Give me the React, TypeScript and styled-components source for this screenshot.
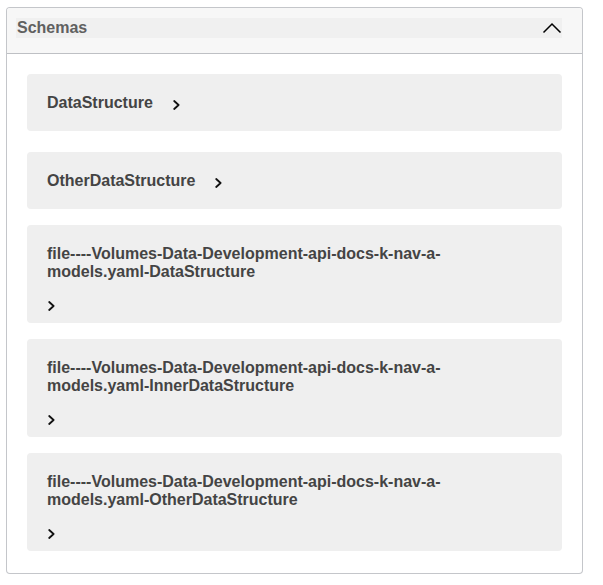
import { createGlobalStyle } from 'styled-components';
import styled from 'styled-components';

const GlobalStyle = createGlobalStyle`
    html, body {
        margin: 0;
        padding: 0;
        background: #ffffff;
        font-family: "Liberation Sans", Arial, Helvetica, sans-serif;
    }
`;

const Page = styled.div`
    padding: 7px 20px 12px 6px;
    width: 577px;
`;

const Section = styled.section`
    border: 1px solid rgba(59, 65, 81, 0.3);
    border-radius: 4px;
    background: #ffffff;
    overflow: hidden;
`;

const Header = styled.h4`
    margin: 0;
    padding: 10px 20px 15px 9px;
    background: #f7f7f7;
    border-bottom: 1px solid rgba(59, 65, 81, 0.3);
`;

const HeaderButton = styled.button`
    display: flex;
    align-items: center;
    justify-content: space-between;
    width: 100%;
    height: 20px;
    padding: 0;
    border: none;
    background: #f0f0f0;
    font-family: inherit;
    font-size: 16px;
    font-weight: 700;
    color: #606060;
    cursor: pointer;
`;

const HeaderLabel = styled.span`
    line-height: 20px;
    padding-left: 1px;
`;

const List = styled.div`
    display: flex;
    flex-direction: column;
    padding: 20px 20px 22px;
`;

const Card = styled.div<{ $gap: number, $wrap?: boolean }>`
    background: #efefef;
    border-radius: 4px;
    padding: ${props => props.$wrap ? '20px 20px 7px' : '20px 20px 19px'};
    margin-bottom: ${props => props.$gap}px;
    font-size: 16px;
    font-weight: 700;
    color: #444444;
`;

const TitleRow = styled.div`
    display: flex;
    align-items: center;
    height: 18px;
    line-height: 18px;
`;

const LongTitle = styled.div`
    max-width: 430px;
    line-height: 18px;
`;

const ToggleRow = styled.div`
    display: flex;
    align-items: center;
    height: 20px;
    margin-top: 15px;
    padding-left: 1px;
`;

const Chevron = styled.svg<{ $inline?: boolean }>`
    display: block;
    flex: none;
    margin-left: ${props => props.$inline ? '20px' : '0'};
    margin-top: ${props => props.$inline ? '3px' : '0'};
`;

function ToggleIcon({ inline }: { inline?: boolean }) {
    return <Chevron $inline={inline} width="7" height="10" viewBox="0 0 7 10">
        <polyline points="1.2,1 5.6,5 1.2,9" fill="none" stroke="#111" strokeWidth="1.8" strokeLinecap="round" strokeLinejoin="round" />
    </Chevron>
}

const shortModels = ['DataStructure', 'OtherDataStructure'];

const longModels = [
    'file----Volumes-Data-Development-api-docs-k-nav-a-models.yaml-DataStructure',
    'file----Volumes-Data-Development-api-docs-k-nav-a-models.yaml-InnerDataStructure',
    'file----Volumes-Data-Development-api-docs-k-nav-a-models.yaml-OtherDataStructure',
];

export default function App() {
    return <>
        <GlobalStyle />
        <Page>
            <Section>
                <Header>
                    <HeaderButton>
                        <HeaderLabel>Schemas</HeaderLabel>
                        <svg width="20" height="20" viewBox="0 0 20 20">
                            <polyline points="1.5,14.5 10,6 18.5,14.5" fill="none" stroke="#000" strokeWidth="1.5" />
                        </svg>
                    </HeaderButton>
                </Header>

                <List>
                    {
                        shortModels.map((name, i) =>
                            <Card key={name} $gap={i === 0 ? 21 : 16}>
                                <TitleRow>
                                    <span>{name}</span>
                                    <ToggleIcon inline />
                                </TitleRow>
                            </Card>
                        )
                    }
                    {
                        longModels.map((name, i) =>
                            <Card key={name} $wrap $gap={i === longModels.length - 1 ? 0 : 16}>
                                <LongTitle>{name}</LongTitle>
                                <ToggleRow>
                                    <ToggleIcon />
                                </ToggleRow>
                            </Card>
                        )
                    }
                </List>
            </Section>
        </Page>
    </>
}
